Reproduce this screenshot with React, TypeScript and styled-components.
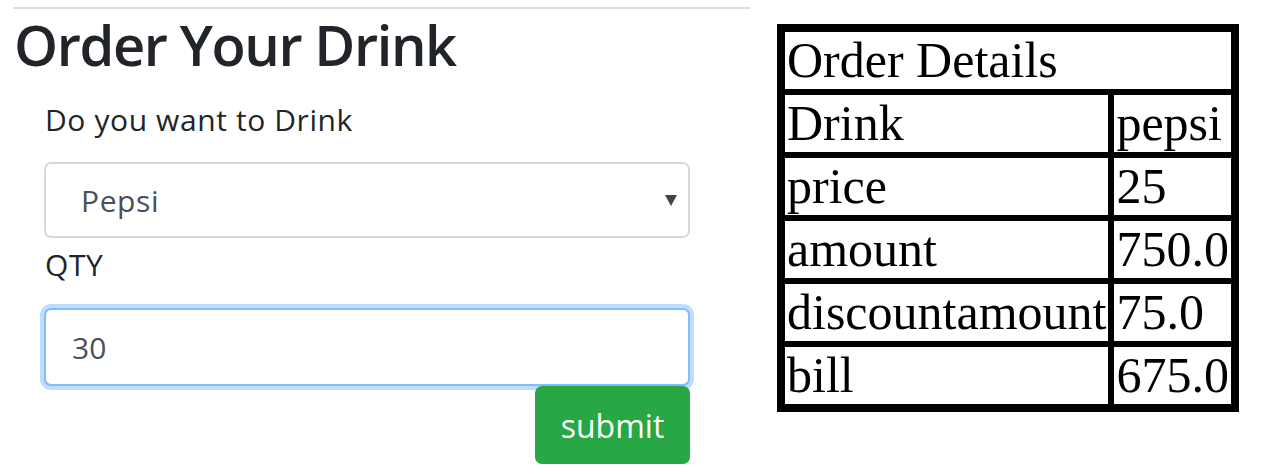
import React, { useState } from 'react';
import styled, { createGlobalStyle } from 'styled-components';

const GlobalStyle = createGlobalStyle`
    body {
        margin: 0;
        background: #fff;
        font-family: "Open Sans", "Noto Sans", sans-serif;
        color: #212529;
    }
`;

const rows = [
    { name: 'Drink', value: 'pepsi' },
    { name: 'price', value: '25' },
    { name: 'amount', value: '750.0' },
    { name: 'discountamount', value: '75.0' },
    { name: 'bill', value: '675.0' },
];

const App = () => {
    const [drink, setDrink] = useState<string>('pepsi');
    const [qty, setQty] = useState<string>('30');

    return (
        <>
            <GlobalStyle />
            <Page>
                <OrderColumn>
                    <Rule />
                    <Title>Order Your Drink</Title>
                    <Form onSubmit={(e) => e.preventDefault()}>
                        <Label>Do you want to Drink</Label>
                        <SelectWrap>
                            <Select value={drink} onChange={(e) => setDrink(e.target.value)}>
                                <option value="pepsi">Pepsi</option>
                                <option value="coke">Coke</option>
                                <option value="sprite">Sprite</option>
                            </Select>
                            <Arrow width="12" height="12" viewBox="0 0 12 12">
                                <path d="M0 1 L12 1 L6 12 Z" fill="#444" />
                            </Arrow>
                        </SelectWrap>
                        <Label $tight>QTY</Label>
                        <Input value={qty} onChange={(e) => setQty(e.target.value)} />
                        <Actions>
                            <SubmitButton type="submit">submit</SubmitButton>
                        </Actions>
                    </Form>
                </OrderColumn>

                <DetailsTable>
                    <tbody>
                        <tr>
                            <Cell colSpan={2}>Order Details</Cell>
                        </tr>
                        {rows.map((o, key) =>
                            <tr key={key}>
                                <Cell>{o.name}</Cell>
                                <Cell>{o.value}</Cell>
                            </tr>
                        )}
                    </tbody>
                </DetailsTable>
            </Page>
        </>
    )
}

export default App;

const Page = styled.div`
    display: flex;
    align-items: flex-start;
    gap: 27px;
    width: 1280px;
    height: 474px;
    overflow: hidden;
`;

const OrderColumn = styled.section`
    width: 737px;
    padding-left: 13px;
`;

const Rule = styled.hr`
    margin: 7px 0 0;
    border: 0;
    border-top: 2px solid #dddddd;
`;

const Title = styled.h1`
    margin: -1px 0 0 1px;
    font-size: 56px;
    font-weight: 600;
    line-height: 72px;
    letter-spacing: -1.4px;
    color: #212529;
`;

const Form = styled.form`
    width: 646px;
    margin: 23px 0 0 31px;
`;

const Label = styled.label<{ $tight?: boolean }>`
    display: block;
    margin: ${p => p.$tight ? '10px 0 26px 1px' : '0 0 25px 1px'};
    font-size: 30px;
    line-height: 34px;
    letter-spacing: 0.6px;
    color: #212529;
`;

const SelectWrap = styled.div`
    position: relative;
`;

const Select = styled.select`
    appearance: none;
    width: 100%;
    height: 76px;
    padding: 0 40px 0 35px;
    border: 2px solid #d6d9dc;
    border-radius: 7px;
    background: #fff;
    font-family: inherit;
    font-size: 30px;
    letter-spacing: 0.6px;
    color: #495057;
    outline: none;
`;

const Arrow = styled.svg`
    position: absolute;
    right: 13px;
    top: 32px;
    pointer-events: none;
`;

const Input = styled.input`
    box-sizing: border-box;
    display: block;
    width: 100%;
    height: 78px;
    padding: 0 26px;
    border: 2px solid #80bdff;
    border-radius: 7px;
    box-shadow: 0 0 0 4px rgba(0, 123, 255, 0.25);
    font-family: inherit;
    font-size: 30px;
    color: #495057;
    outline: none;
`;

const Actions = styled.div`
    display: flex;
    justify-content: flex-end;
`;

const SubmitButton = styled.button`
    width: 155px;
    height: 78px;
    border: 0;
    border-radius: 7px;
    background: #28a745;
    color: #fff;
    font-family: inherit;
    font-size: 32px;
    cursor: pointer;
`;

const DetailsTable = styled.table`
    margin-top: 24px;
    border: 5px solid #000;
    border-spacing: 0;
    font-family: "Liberation Serif", "Times New Roman", serif;
    font-size: 50px;
    color: #000;
`;

const Cell = styled.td`
    padding: 0 2px;
    height: 57px;
    line-height: 57px;
    border-style: solid;
    border-color: #000;
    border-width: 3px;
    white-space: nowrap;
`;
